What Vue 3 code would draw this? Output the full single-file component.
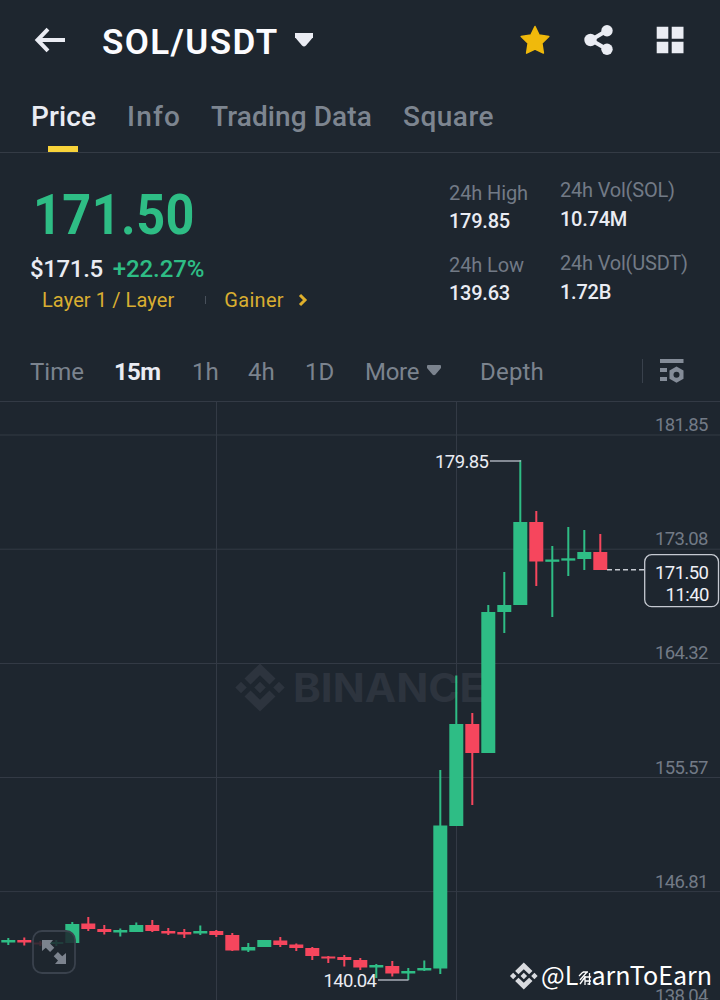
<script setup>
const tabs = ['Price', 'Info', 'Trading Data', 'Square']

const frames = [
  { label: 'Time', key: 'time' },
  { label: '15m', key: 'm15' },
  { label: '1h', key: 'h1' },
  { label: '4h', key: 'h4' },
  { label: '1D', key: 'd1' },
]

const stats = [
  [
    { label: '24h High', value: '179.85' },
    { label: '24h Low', value: '139.63' },
  ],
  [
    { label: '24h Vol(SOL)', value: '10.74M' },
    { label: '24h Vol(USDT)', value: '1.72B' },
  ],
]

// direction, wick top, wick bottom, body top, body bottom
const candles = [
  ['up', 938, 945, 940, 942.5],
  ['down', 937.5, 945.5, 940, 942.5],
  ['down', 941, 946, 942.5, 944.5],
  ['up', 940, 946, 942, 944],
  ['up', 922, 943, 924, 943],
  ['down', 917, 931, 923.5, 929],
  ['down', 925, 934.5, 929, 932],
  ['up', 928.5, 936.5, 930, 932.5],
  ['up', 922.5, 932, 925, 932],
  ['down', 920, 932, 925, 931],
  ['down', 928, 935, 931, 933.5],
  ['down', 929, 938, 932, 934.5],
  ['up', 925.5, 935, 931, 933.5],
  ['down', 930, 937, 931, 935],
  ['down', 933, 951, 935, 950.5],
  ['up', 943, 952, 947, 950.5],
  ['up', 940, 947, 940, 947],
  ['down', 937, 947, 940.5, 945],
  ['down', 943.5, 951, 944.5, 948],
  ['down', 947, 960, 948, 956],
  ['down', 956, 963, 956.5, 958.5],
  ['down', 955, 966.5, 957, 960],
  ['down', 958, 970, 960, 967.5],
  ['up', 964, 978, 965, 967.5],
  ['down', 961, 976.5, 966, 973.5],
  ['up', 968, 980, 971, 973.5],
  ['up', 960.5, 971, 968, 970.5],
  ['up', 770, 974, 825.5, 968.5],
  ['up', 675.5, 826, 724, 826],
  ['down', 713, 805, 724, 753],
  ['up', 605, 753, 612, 753],
  ['up', 572, 633, 605, 612],
  ['up', 460, 605, 522, 605],
  ['down', 511, 586, 522, 561.5],
  ['up', 546, 617, 559.5, 561.8],
  ['up', 527, 576, 558.3, 560.6],
  ['up', 530, 570, 552, 559],
  ['down', 534, 570, 552, 570],
].map(([dir, high, low, top, bottom], i) => ({ dir, high, low, top, bottom, x: 8.3 + i * 16 }))

const axis = [
  { line: 435, text: '181.85', y: 431 },
  { line: 549.2, text: '173.08', y: 545 },
  { line: 663.5, text: '164.32', y: 659 },
  { line: 777.5, text: '155.57', y: 774 },
  { line: 891.6, text: '146.81', y: 888 },
  { line: 1006, text: '138.04', y: 1002 },
]
</script>

<template>
  <main class="screen">
    <header class="top">
      <svg class="back" width="32" height="26" viewBox="0 0 32 26">
        <path d="M14 2.2 3.5 13 14 23.8M4 13H31" />
      </svg>
      <h1>SOL/USDT</h1>
      <svg class="caret" width="20" height="16" viewBox="0 0 20 16">
        <path d="M1 1h18v4.200L12 13.400q-2 2-4 0L1 5.200Z" />
      </svg>
      <div class="actions">
        <svg width="32" height="32" viewBox="0 0 32 32">
          <path
            class="star"
            d="m16 2.500 4 8.400 9.800 1.600-6.900 6.800 1.500 9.800L16 25l-8.400 4.100 1.500-9.800-6.900-6.800L12 10.900Z"
          />
        </svg>
        <svg width="32" height="32" viewBox="0 0 32 32">
          <path class="link" d="M24 6.500 8 16l16 9.200" />
          <g class="solid">
            <circle cx="24" cy="6.800" r="5.700" />
            <circle cx="7.500" cy="16" r="6.200" />
            <circle cx="24" cy="25.200" r="5.700" />
          </g>
        </svg>
        <svg class="tiles" width="28" height="28" viewBox="0 0 28 28">
          <path class="solid" d="M.7.700h11.600v12H.7zM15.700.700h11.800v12H15.700zM.7 15.700h11.600v11.600H.7zM15.700 15.700h11.800v11.600H15.700z" />
        </svg>
      </div>
    </header>

    <nav class="tabs">
      <span v-for="(tab, i) in tabs" :key="tab" class="tab" :class="{ active: i === 0 }">{{ tab }}</span>
    </nav>

    <section class="summary">
      <div class="quote">
        <div class="price">171.50</div>
        <div class="change"><b>$171.5</b><span>+22.27%</span></div>
        <div class="tags">
          <span>Layer 1 / Layer</span>
          <i></i>
          <span class="gainer">Gainer</span>
          <svg width="10" height="14" viewBox="0 0 10 14"><path d="m2 2 5 5-5 5" /></svg>
        </div>
      </div>
      <div v-for="(column, c) in stats" :key="c" class="stats" :class="'col' + c">
        <div v-for="s in column" :key="s.label" class="stat">
          <span>{{ s.label }}</span>
          <strong>{{ s.value }}</strong>
        </div>
      </div>
    </section>

    <nav class="frames">
      <span v-for="f in frames" :key="f.key" :class="f.key">{{ f.label }}</span>
      <span class="more">More</span>
      <svg class="drop" width="14" height="11" viewBox="0 0 14 11">
        <path d="M1 0h12q1 0 1 1v2L8.500 9.500q-1.500 1.500-3 0L0 3V1q0-1 1-1Z" />
      </svg>
      <span class="depth">Depth</span>
      <i></i>
      <svg class="settings" width="24" height="24" viewBox="0 0 24 24">
        <path d="M0 0h23.500v4H0zM0 9h7v4H0zM0 18h7v4H0z" />
        <path fill-rule="evenodd" d="M16.500 7.500 23.500 11.600v8.200l-7 4-7-4v-8.200ZM16.500 12.700a3 3 0 1 0 0 6 3 3 0 0 0 0-6Z" />
      </svg>
    </nav>

    <svg class="chart" width="720" height="600" viewBox="0 400 720 600">
      <defs>
        <g id="mark">
          <path d="m0-24 15.500 15-6 6L0-12.200-9.500-3l-6-6ZM0 24l15.500-15-6-6L0 12.200-9.500 3l-6 6ZM0-5.800 5.800 0 0 5.800-5.800 0ZM-19-5.700-13.200 0-19 5.700-24.700 0ZM19-5.700 24.700 0 19 5.700 13.200 0Z" />
        </g>
      </defs>

      <g class="grid">
        <path d="M0 401.500H720M216.500 402V1000M456.500 402V1000" />
        <path v-for="a in axis" :key="a.text" :d="`M0 ${a.line}H720`" />
      </g>

      <g class="brand">
        <use href="#mark" x="260" y="687.500" />
        <text x="293" y="701.500" textLength="192" lengthAdjust="spacingAndGlyphs">BINANCE</text>
      </g>

      <g v-for="c in candles" :key="c.x" :class="c.dir">
        <rect :x="c.x - 1" :y="c.high" width="2" :height="c.low - c.high" />
        <rect :x="c.x - 7" :y="c.top" width="14" :height="c.bottom - c.top" />
      </g>

      <g class="axis">
        <text v-for="a in axis" :key="a.text" x="655" :y="a.y" textLength="53.500">{{ a.text }}</text>
      </g>

      <g class="extremes">
        <path d="M490 461H521M378 980H408.500" />
        <text x="435" y="468" textLength="54">179.85</text>
        <text x="323.500" y="987" textLength="53.500">140.04</text>
      </g>

      <path class="dash" d="M607 569.800H644" />
      <g class="current">
        <rect x="644.700" y="554.700" width="73.800" height="52" rx="7" />
        <text x="655" y="579" textLength="54">171.50</text>
        <text x="665.500" y="601" textLength="44">11:40</text>
      </g>

      <g class="expand">
        <rect x="33" y="931" width="42" height="42" rx="9" />
        <path d="M42 940h11l-3 3.500 4.300 4.300-4.200 4.200-4.300-4.300L42 951ZM66 964H55l3-3.500-4.300-4.300 4.200-4.200 4.300 4.300L66 953Z" />
      </g>

      <g class="author">
        <use href="#mark" transform="translate(523.800 976) scale(.56)" />
        <text x="541" y="985" textLength="171" lengthAdjust="spacingAndGlyphs">@LearnToEarn</text>
      </g>
      <g class="scramble">
        <rect x="578.500" y="970" width="12.500" height="16" />
        <path d="m579 976 4-4M580 980l7-8M580 984l5-7M583 972h5M585 985v-9M589.500 973v12M585 977h6M585 981h6M587.500 984h3" />
      </g>
    </svg>
  </main>
</template>

<style>
body {
  background: #1e262f;
  overflow: hidden;
}
</style>

<style scoped>
.screen {
  width: 720px;
  height: 1000px;
  overflow: hidden;
  background: #1e262f;
  color: #eaecf3;
  font-family: Roboto, 'Liberation Sans', sans-serif;
}
.top {
  display: flex;
  align-items: center;
  height: 80px;
  padding: 0 36px 0 34px;
}
.back { fill: none; stroke: #eaecf3; stroke-width: 4; }
h1 {
  width: 190px;
  margin: 5px 0 0 36px;
  font-size: 35px;
  font-weight: 600;
  line-height: 44px;
  letter-spacing: 1.400px;
  color: #fcfcff;
}
.caret { margin-left: 2px; fill: #eaecf3; }
.actions {
  display: flex;
  align-items: center;
  gap: 32px;
  margin-left: auto;
}
.tiles { margin-left: 9px; }
.star { fill: #f0b90b; stroke: #f0b90b; stroke-width: 1.500; stroke-linejoin: round; }
.link { fill: none; stroke: #eaecf3; stroke-width: 4; }
.solid { fill: #eaecf3; }
.tabs {
  display: grid;
  grid-template-columns: 96px 84px 192px 1fr;
  box-sizing: border-box;
  height: 73px;
  padding: 18px 0 0 31px;
  border-bottom: 1px solid #343b45;
  font-size: 28px;
  font-weight: 500;
  line-height: 38px;
  letter-spacing: .1px;
  color: #7d8590;
}
.tab:nth-child(2) { letter-spacing: 1.200px; }
.tab:nth-child(4) { letter-spacing: .5px; }
.active { color: #eaecf3; }
.active::after {
  content: '';
  display: block;
  width: 30px;
  height: 6px;
  margin: 10px 0 0 17px;
  background: #f8d33a;
}
.summary {
  display: grid;
  grid-template-columns: 419px 111px 1fr;
  height: 190px;
  padding-left: 30px;
}
.price {
  margin: 30px 0 0 3px;
  font-size: 56px;
  font-weight: 700;
  line-height: 64px;
  letter-spacing: .5px;
  color: #2ebd85;
  transform: scaleX(.9);
  transform-origin: 0 0;
}
.change {
  display: flex;
  gap: 10px;
  margin-top: 7px;
  font-size: 24px;
  font-weight: 500;
  line-height: 30px;
}
.change b { font-weight: 500; letter-spacing: -.35px; }
.change span { color: #2ebd85; letter-spacing: -.1px; }
.tags {
  display: flex;
  align-items: center;
  margin: 4px 0 0 12px;
  font-size: 20px;
  line-height: 24px;
  letter-spacing: .1px;
  color: #d9ae31;
}
.tags i { width: 1px; height: 8px; margin: 0 18px 0 31px; background: #48505b; }
.gainer { letter-spacing: .3px; }
.tags svg { margin-left: 14px; fill: none; stroke: #e0b02b; stroke-width: 3; }
.stats { padding-top: 28px; }
.col1 { padding-top: 25px; }
.stat { height: 72px; font-size: 20px; white-space: nowrap; }
.col1 .stat { height: 73px; }
.stat span { display: block; line-height: 24px; color: #727a86; letter-spacing: -.1px; }
.col1 span { letter-spacing: -.2px; }
.stat strong { display: block; margin-top: 4px; line-height: 24px; font-weight: 500; letter-spacing: -.25px; }
.col1 strong { margin-top: 5px; }
.frames {
  display: flex;
  align-items: center;
  height: 57px;
  padding-left: 30px;
  font-size: 24px;
  line-height: 30px;
  color: #7b838e;
}
.time { width: 84px; }
.m15 { width: 78px; font-weight: 700; letter-spacing: -.7px; color: #eaecf3; }
.h1 { width: 56px; }
.h4 { width: 57px; }
.d1 { width: 60px; }
.more { width: 62px; letter-spacing: -.3px; }
.drop { margin-bottom: 2px; fill: #7b838e; }
.depth { width: 162px; margin-left: 39px; letter-spacing: .2px; }
.frames i { width: 1px; height: 24px; margin-bottom: 2px; background: #39414c; }
.settings { margin: 0 0 2px 17px; fill: #848c98; }
.chart { display: block; }
.grid { fill: none; stroke: #333a45; stroke-width: 1; }
.brand { fill: #2d343e; }
.brand text { font: 700 39px Inter, sans-serif; }
.up { fill: #2ebd85; }
.down { fill: #f6465d; }
.axis { fill: #727a86; font-size: 18.500px; }
.extremes { fill: #eaecf3; font-size: 18.500px; }
.extremes path { stroke: #a7acb6; stroke-width: 1.500; }
.dash { stroke: #c5c9d1; stroke-width: 1.400; stroke-dasharray: 5 3; }
.current { fill: #eef0f6; font-size: 18.500px; }
.current rect { fill: #1e262f; stroke: #c5c9d1; stroke-width: 1.300; }
.expand { fill: #7c838e; }
.expand rect { fill: #1e262f; fill-opacity: .86; stroke: #3a424d; stroke-width: 1.800; }
.author { fill: #d9dbdf; }
.author text { fill: #fff; font: 400 25px 'Noto Sans CJK SC', sans-serif; }
.scramble rect { fill: #1e262f; }
.scramble path { fill: none; stroke: #fff; stroke-width: 1.300; }
</style>
